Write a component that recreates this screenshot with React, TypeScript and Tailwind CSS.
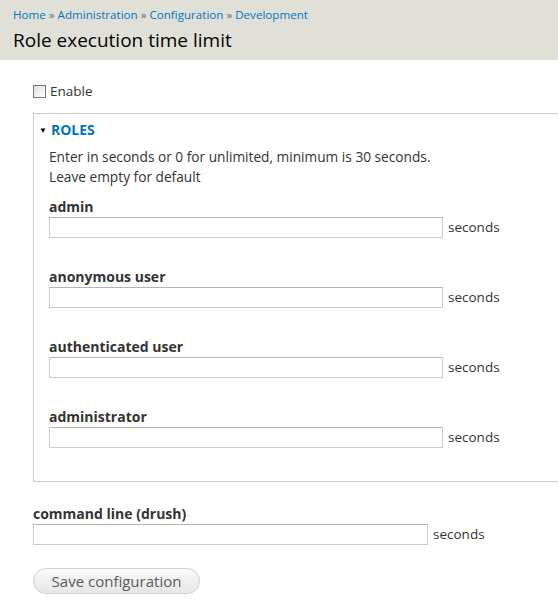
import React from "react";

const ROLES = ["admin", "anonymous user", "authenticated user", "administrator"];

function SecondsField({ label, inputClass }: { label: string; inputClass: string }) {
  return (
    <div>
      <label className="block text-[14px] font-bold leading-[20px] text-[#333]">{label}</label>
      <div className="flex items-center">
        <input type="text" className={`h-[21px] border border-[#ccc] border-t-[#b4b4b4] bg-white ${inputClass}`} />
        <span className="ml-[5px] text-[13.5px] text-[#333]">seconds</span>
      </div>
    </div>
  );
}

export default function App() {
  return (
    <div className="min-h-[612px] w-[558px] overflow-hidden bg-white font-['Open_Sans',sans-serif]">
      <div className="h-[60px] bg-[#e0e0d8] px-[13px] pt-[6px]">
        <div className="text-[11.6px] leading-[18px] text-[#0074bd]">
          <span>Home</span> <span className="text-[#666]">»</span> <span>Administration</span>{" "}
          <span className="text-[#666]">»</span> <span>Configuration</span> <span className="text-[#666]">»</span>{" "}
          <span>Development</span>
        </div>
        <h1 className="mt-[2px] text-[19px] leading-[28px] font-normal text-black">Role execution time limit</h1>
      </div>

      <div className="pl-[33px] pt-[22px]">
        <label className="flex items-center gap-[4px] text-[13.5px] leading-[18px] text-[#333]">
          <span className="h-[13px] w-[13px] border border-[#777] bg-gradient-to-br from-[#ddd] to-white" />
          Enable
        </label>

        <div className="mt-[13px] w-[560px] border border-[#ccc] pb-[33px] pl-[15px] pt-[6px]">
          <div className="flex items-center gap-[4px] -ml-[10px] text-[14px] font-bold leading-[20px] text-[#0074bd]">
            <span className="text-[8px] text-black">▼</span>
            ROLES
          </div>
          <div className="mt-[7px] text-[13.7px] leading-[20px] text-[#333]">
            <div>Enter in seconds or 0 for unlimited, minimum is 30 seconds.</div>
            <div>Leave empty for default</div>
          </div>
          <div className="mt-[10px] flex flex-col gap-[29px]">
            {ROLES.map((r) => (
              <SecondsField key={r} label={r} inputClass="w-[394px]" />
            ))}
          </div>
        </div>

        <div className="mt-[22px]">
          <SecondsField label="command line (drush)" inputClass="w-[395px]" />
        </div>

        <button className="mt-[23px] h-[26px] w-[167px] rounded-full border border-[#d0d0d0] bg-gradient-to-b from-[#fafafa] to-[#e6e6e6] text-[15px] text-[#5a5a5a]">
          Save configuration
        </button>
      </div>
    </div>
  );
}
